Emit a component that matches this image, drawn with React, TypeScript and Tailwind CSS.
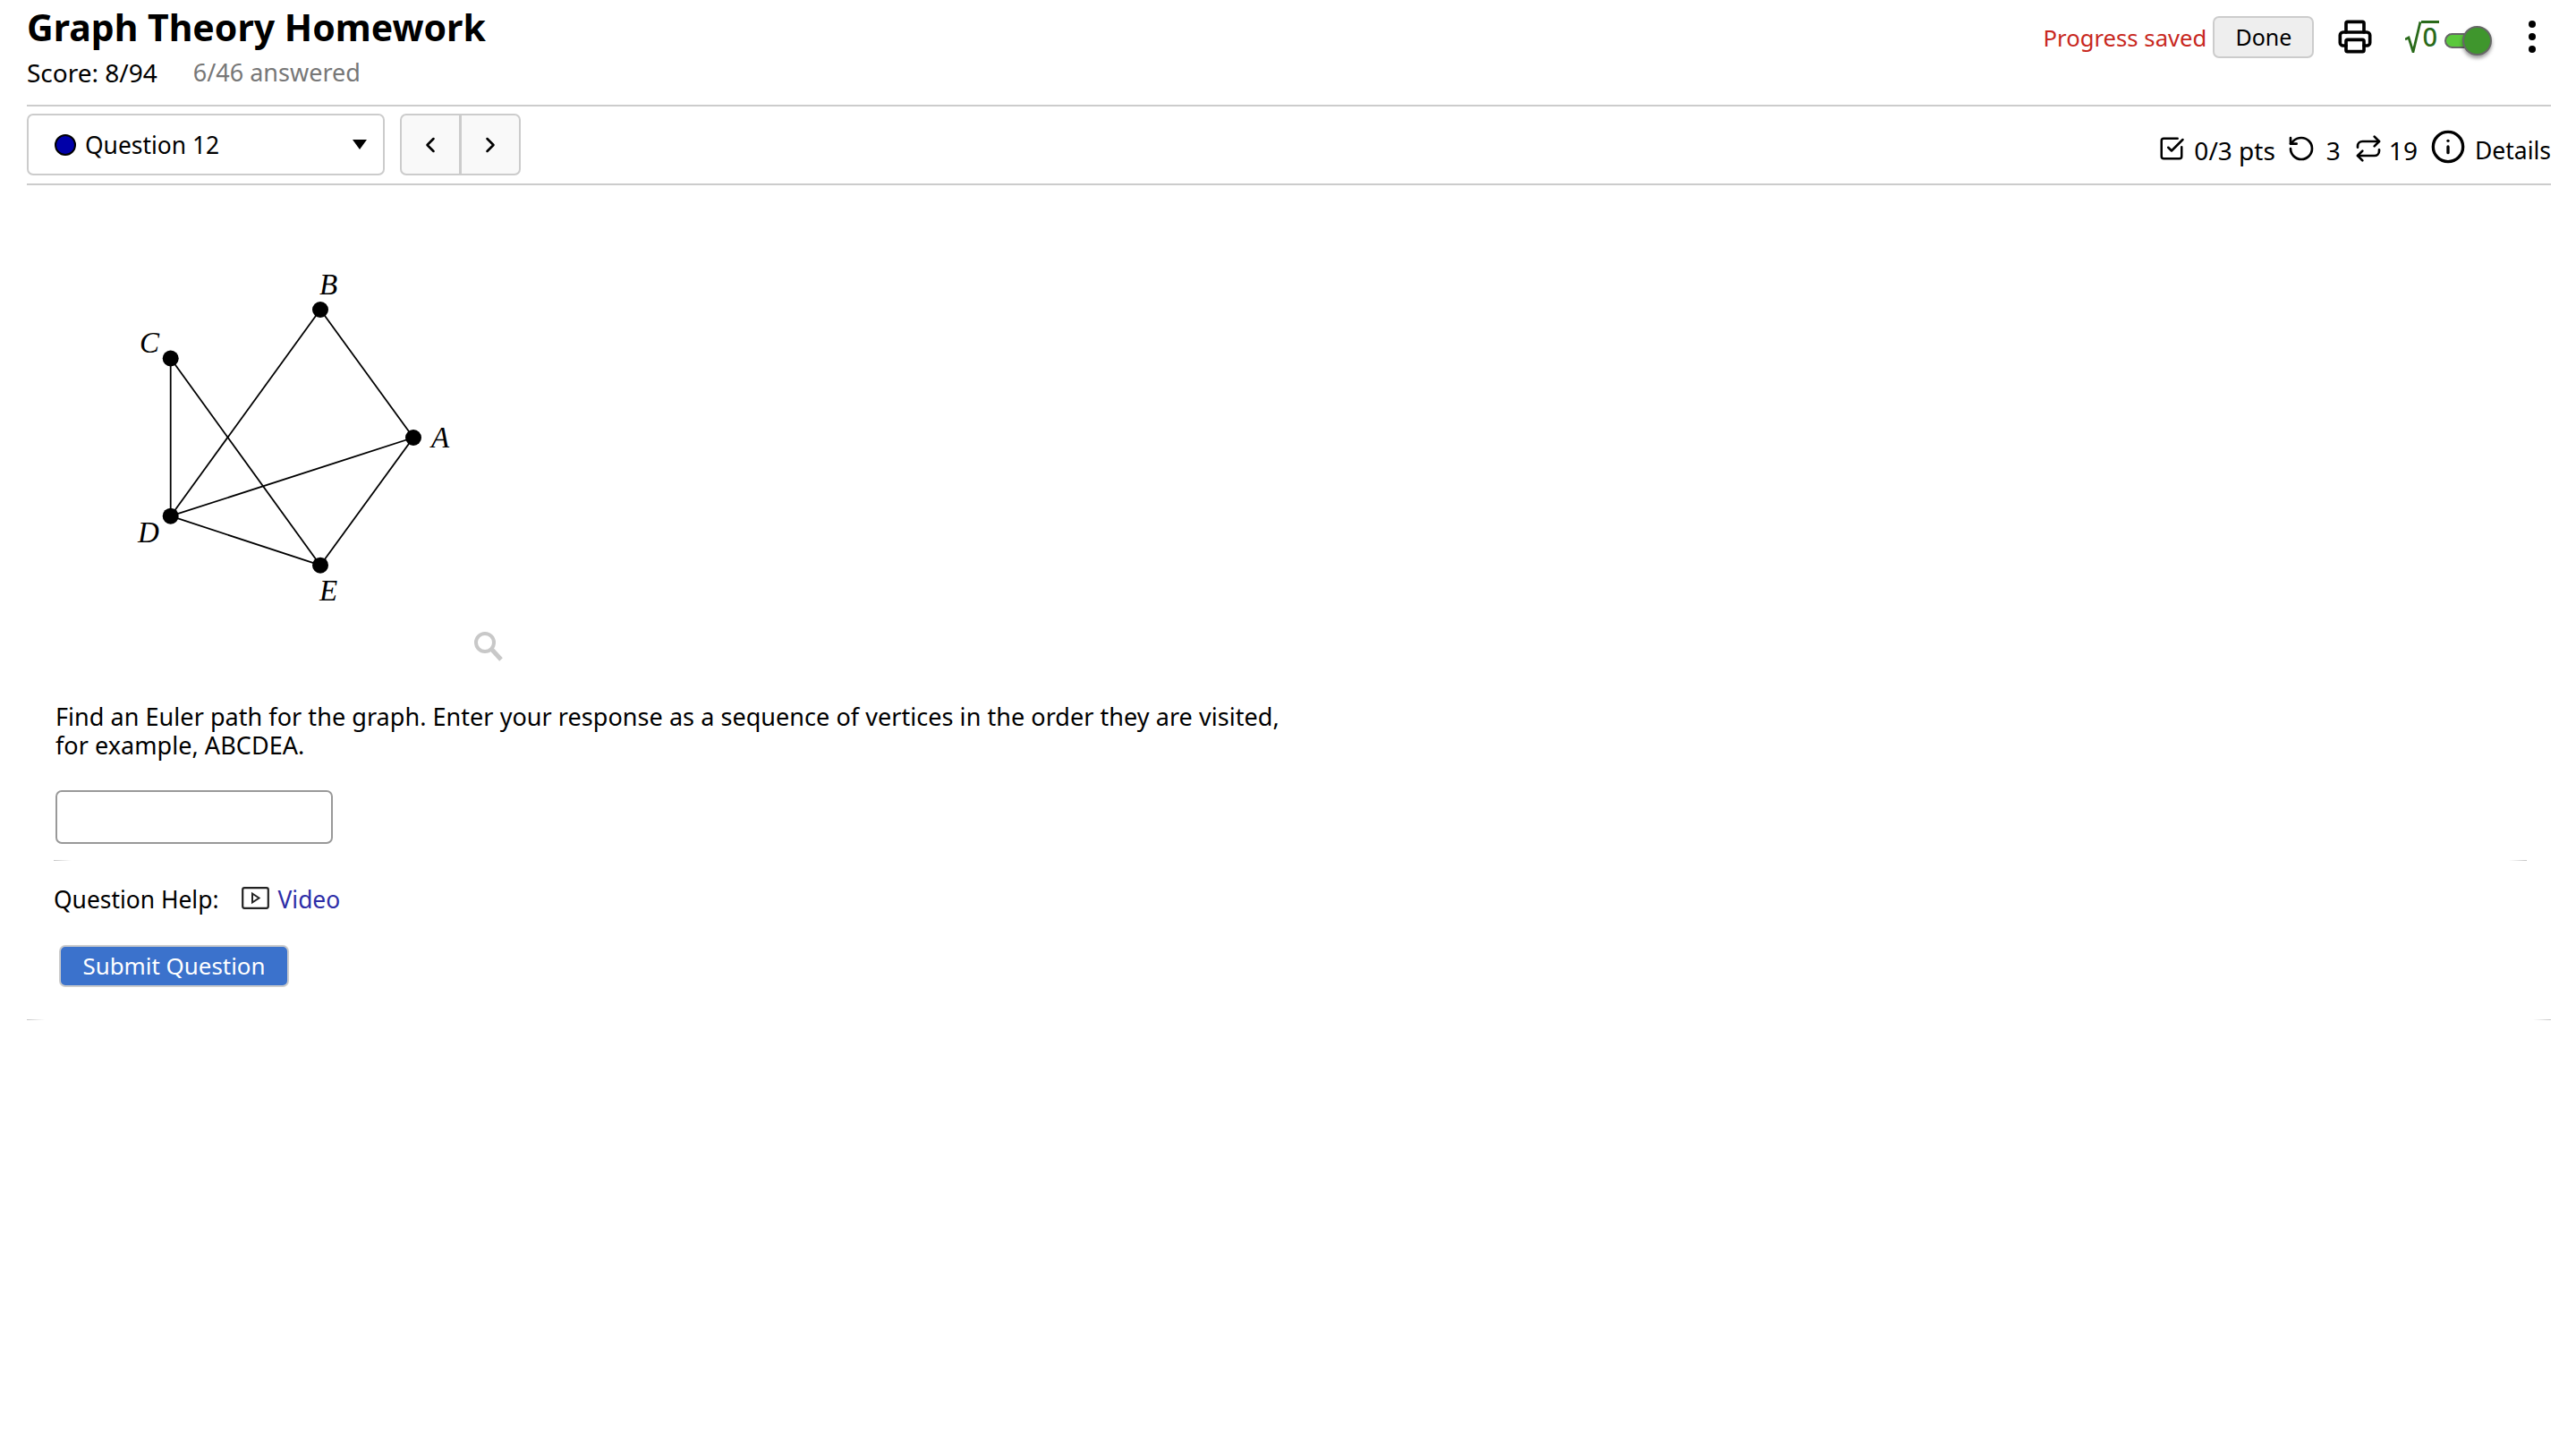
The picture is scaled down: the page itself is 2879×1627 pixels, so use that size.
import { ChevronLeft, ChevronRight, Info, Printer, Repeat, RotateCcw, SquareCheckBig } from 'lucide-react';

const points = [
  { x: 238, y: 66 },
  { x: 70.7, y: 120.5 },
  { x: 342, y: 209 },
  { x: 70.7, y: 296.7 },
  { x: 238, y: 351.7 },
];

const edges = [
  [0, 2],
  [0, 3],
  [1, 3],
  [1, 4],
  [2, 3],
  [2, 4],
  [3, 4],
];

const labels = [
  { text: 'B', x: 247, y: 49 },
  { text: 'C', x: 47, y: 114 },
  { text: 'A', x: 372, y: 220 },
  { text: 'D', x: 46, y: 326 },
  { text: 'E', x: 247, y: 391 },
];

function Graph() {
  return (
    <svg width="480" height="480" viewBox="0 0 480 480" className="block">
      {edges.map(([a, b], i) => (
        <line key={i} x1={points[a].x} y1={points[a].y} x2={points[b].x} y2={points[b].y} stroke="#000" strokeWidth="1.8" />
      ))}
      {points.map((p, i) => (
        <circle key={i} cx={p.x} cy={p.y} r="9" fill="#000" />
      ))}
      {labels.map((l) => (
        <text
          key={l.text}
          x={l.x}
          y={l.y}
          textAnchor="middle"
          fontSize="33"
          fontStyle="italic"
          fontFamily="'Liberation Serif', serif"
          fill="#000"
        >
          {l.text}
        </text>
      ))}
      {/* zoom icon */}
      <circle cx="422" cy="438" r="10" fill="none" stroke="#c8c8c8" strokeWidth="4" />
      <line x1="429" y1="445" x2="440" y2="457" stroke="#c8c8c8" strokeWidth="5" />
    </svg>
  );
}

function FadedRule({ className }: { className: string }) {
  return (
    <div className={`h-px bg-[linear-gradient(to_right,#c4c4c4,transparent_20px,transparent_calc(100%-20px),#c4c4c4)] ${className}`} />
  );
}

export default function App() {
  return (
    <div className="min-h-[1627px] bg-white pl-[30px] pr-[28px] font-['Noto_Sans',sans-serif] text-black">
      {/* Title row */}
      <header className="flex h-[119px] items-start justify-between border-b-2 border-[#ccc]">
        <div>
          <h1 className="mt-[3px] text-[41px] font-bold leading-[54px]">Graph Theory Homework</h1>
          <div className="mt-[6px] flex text-[27px] leading-[36px]">
            <span className="text-[28px]">Score: 8/94</span>
            <span className="ml-[40px] text-[#777]">6/46 answered</span>
          </div>
        </div>
        <div className="mt-[18px] flex items-start">
          <span className="mt-[7px] text-[25.7px] leading-[36px] text-[#c8281e]">Progress saved</span>
          <button className="ml-[7px] h-[47px] w-[113px] rounded-[7px] border-2 border-[#ccc] bg-[#eee] text-[25px] leading-none">Done</button>
          <Printer className="ml-[26px] mt-[3px] h-[40px] w-[40px] text-black" strokeWidth={2.2} />
          <div className="ml-[36px] mt-[5px] flex h-[36px] items-start text-[#2a6a1a]">
            <svg width="18" height="36" viewBox="0 0 18 36" className="block">
              <path d="M0 21 L4 19 L9 35 L17 1.4" fill="none" stroke="currentColor" strokeWidth="2.8" />
            </svg>
            <span className="border-t-[3px] border-[#2a6a1a] pl-[1px] pr-[2px] text-[29px] font-medium leading-[30px]">0</span>
          </div>
          {/* toggle */}
          <div className="relative ml-[6px] mt-[19px] h-[17px] w-[40px] rounded-full border-2 border-[#666] bg-[#5ac83c]">
            <div className="absolute left-[18px] top-[-10px] h-[33px] w-[33px] rounded-full border-2 border-[#666] bg-[#3f962d] shadow-[0_3px_4px_rgba(0,0,0,0.4)]" />
          </div>
          <div className="ml-[54px] mt-[5px] flex flex-col gap-[6px]">
            <span className="h-[8px] w-[8px] rounded-full bg-black" />
            <span className="h-[8px] w-[8px] rounded-full bg-black" />
            <span className="h-[8px] w-[8px] rounded-full bg-black" />
          </div>
          <span className="w-[17px]" />
        </div>
      </header>

      {/* Question nav row */}
      <div className="flex h-[88px] items-start justify-between border-b-2 border-[#ccc] pt-[8px]">
        <div className="flex">
          <div className="flex h-[69px] w-[400px] items-center rounded-[7px] border-2 border-[#ccc] pl-[29px] pr-[18px]">
            <span className="h-[24px] w-[24px] rounded-full border-2 border-black bg-[#0000a8]" />
            <span className="ml-[10px] mt-[2px] flex-1 text-[26.4px]">Question 12</span>
            <span className="h-0 w-0 border-x-[8px] border-t-[11px] border-x-transparent border-t-black" />
          </div>
          <div className="ml-[17px] flex h-[69px] w-[135px] rounded-[7px] border-2 border-[#ccc] bg-[#f9f9f9]">
            <div className="flex flex-1 items-center justify-center border-r-[3px] border-[#ccc]">
              <ChevronLeft className="h-[28px] w-[28px]" strokeWidth={2.2} />
            </div>
            <div className="flex flex-1 items-center justify-center">
              <ChevronRight className="h-[28px] w-[28px]" strokeWidth={2.2} />
            </div>
          </div>
        </div>
        <div className="mt-[14px] flex items-center text-[28px] leading-[36px]">
          <SquareCheckBig className="mt-[5px] h-[30px] w-[30px]" strokeWidth={2} />
          <span className="ml-[10px] mt-[9px]">0/3 pts</span>
          <RotateCcw className="ml-[13px] mt-[5px] h-[32px] w-[32px]" strokeWidth={2} />
          <span className="ml-[12px] mt-[9px]">3</span>
          <Repeat className="ml-[15px] mt-[5px] h-[32px] w-[32px]" strokeWidth={2} />
          <span className="ml-[7px] mt-[9px]">19</span>
          <Info className="ml-[14px] h-[40px] w-[40px]" strokeWidth={2} />
          <span className="ml-[10px] mt-[9px] text-[26.5px]">Details</span>
        </div>
      </div>

      {/* Graph */}
      <div className="ml-[90px] mt-[73px]">
        <Graph />
      </div>

      {/* Question body */}
      <p className="ml-[32px] mt-[25px] w-[1400px] text-[27px] leading-[32px] tracking-[0.05px]">
        Find an Euler path for the graph. Enter your response as a sequence of vertices in the order they are visited,
        for example, ABCDEA.
      </p>
      <input className="ml-[32px] mt-[34px] block h-[60px] w-[310px] rounded-[7px] border-2 border-[#999] bg-white" />
      <FadedRule className="ml-[30px] mr-[27px] mt-[18px]" />

      <div className="ml-[30px] mt-[26px] flex h-[36px] items-center text-[26.4px]">
        <span>Question Help:</span>
        <svg width="31" height="25" viewBox="0 0 31 25" className="ml-[26px] mb-[6px]">
          <rect x="1.2" y="1.2" width="28.6" height="22.6" rx="2" fill="none" stroke="#222" strokeWidth="2.2" />
          <path d="M12 7.5 L19.5 12.5 L12 17.5 Z" fill="none" stroke="#222" strokeWidth="2" />
        </svg>
        <a className="ml-[9px] text-[#2e2ea8]">Video</a>
      </div>

      <button className="ml-[36px] mt-[32px] block h-[47px] w-[257px] rounded-[7px] border-2 border-[#ccc] bg-[#3b72cc] text-[25.9px] leading-none text-white">
        Submit Question
      </button>
      <FadedRule className="mt-[36px]" />
    </div>
  );
}
